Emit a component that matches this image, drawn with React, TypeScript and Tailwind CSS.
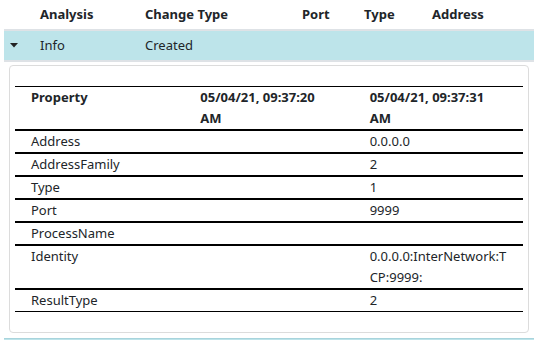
import React from "react";

const rows: { k: string; v: string[]; h?: boolean; last?: boolean }[] = [
  { k: "Address", v: ["0.0.0.0"] },
  { k: "AddressFamily", v: ["2"] },
  { k: "Type", v: ["1"] },
  { k: "Port", v: ["9999"] },
  { k: "ProcessName", v: [] },
  { k: "Identity", v: ["0.0.0.0:InterNetwork:T", "CP:9999:"] },
  { k: "ResultType", v: ["2"], last: true },
];

export default function App() {
  return (
    <div
      className="w-[537px] h-[340px] overflow-hidden bg-white text-[13px] text-[#212529]"
      style={{ fontFamily: '"Noto Sans", "Open Sans", sans-serif' }}
    >
      {/* header */}
      <div className="h-[29px] flex items-center font-bold">
        <div className="w-[40px]" />
        <div className="w-[105px]">Analysis</div>
        <div className="w-[157px]">Change Type</div>
        <div className="w-[62px]">Port</div>
        <div className="w-[68px]">Type</div>
        <div>Address</div>
      </div>
      {/* selected row */}
      <div className="ml-[4px] w-[530px] h-[33px] border-t-2 border-b-2 border-[#dee2e6] bg-[#bde4ea] flex items-center">
        <div className="w-[36px] pl-[6px] flex items-center">
          <svg width="8" height="5" viewBox="0 0 8 5">
            <path d="M0 0 L8 0 L4 4.5 Z" fill="#222" />
          </svg>
        </div>
        <div className="w-[105px]">Info</div>
        <div>Created</div>
      </div>
      {/* card */}
      <div className="mt-[3px] ml-[9px] w-[520px] h-[268px] border border-[#dcdcdc] rounded-[4px] px-[5px] pt-[20px]">
        <div className="border-t border-black">
          <div className="grid grid-cols-3 font-bold leading-[21px] border-b-2 border-black">
            <div className="pl-[16px]">Property</div>
            <div className="pl-[16px] pr-[20px]">05/04/21, 09:37:20 AM</div>
            <div className="pl-[16px] pr-[20px]">05/04/21, 09:37:31 AM</div>
          </div>
          {rows.map((r) => (
            <div
              key={r.k}
              className={
                "grid grid-cols-3 leading-[21px] border-black " +
                (r.last ? "border-b" : "border-b-2")
              }
            >
              <div className="pl-[16px]">{r.k}</div>
              <div className="pl-[16px]" />
              <div className="pl-[16px] min-h-[21px]">
                {r.v.map((x) => (
                  <div key={x}>{x}</div>
                ))}
              </div>
            </div>
          ))}
        </div>
      </div>
      <div className="mt-[5px] ml-[4px] w-[530px] h-[10px] border-t border-[#a8d4dc] bg-[#bde4ea]" />
    </div>
  );
}
